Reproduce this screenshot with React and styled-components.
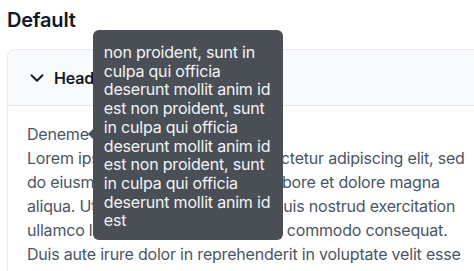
import React from 'react';
import styled, { createGlobalStyle } from 'styled-components';
import { ChevronDown } from 'lucide-react';

const GlobalStyle = createGlobalStyle`
  html, body {
    margin: 0;
    padding: 0;
    overflow: hidden;
    background: #ffffff;
    font-family: Inter, "Noto Sans", "Liberation Sans", sans-serif;
    letter-spacing: -0.2px;
  }
`;

const Page = styled.div`
  padding: 6px 0 0 7px;
  height: 271px;
  box-sizing: border-box;
  overflow: hidden;
`;

const Title = styled.h2`
  margin: 0 0 15px;
  font-size: 20px;
  line-height: 28px;
  font-weight: 600;
  color: #111827;
`;

const Card = styled.div`
  width: 490px;
  border: 1px solid #e5e7eb;
  border-radius: 8px;
  background: #ffffff;
`;

const Header = styled.button`
  display: flex;
  align-items: center;
  gap: 6px;
  width: 100%;
  height: 56px;
  padding: 0 20px 0 18px;
  border: 0;
  border-bottom: 1px solid #e5e7eb;
  border-radius: 8px 8px 0 0;
  background: #f9fafb;
  font-family: inherit;
  letter-spacing: inherit;
  font-size: 16px;
  font-weight: 600;
  color: #111827;
  text-align: left;
`;

const Body = styled.div`
  padding: 16px 28px 20px 19px;
  font-size: 16px;
  line-height: 24px;
  color: #4b5563;
`;

const Trigger = styled.span`
  position: relative;
  display: inline-block;
`;

const Tooltip = styled.div`
  position: absolute;
  left: calc(100% + 4px);
  top: -92px;
  z-index: 10;
  width: 190px;
  box-sizing: border-box;
  padding: 13px 12px 10px 11px;
  border-radius: 6px;
  background: #4a4f56;
  color: #f3f4f6;
  font-size: 16px;
  line-height: 18.7px;

  &::before {
    content: '';
    position: absolute;
    left: -5px;
    top: 99px;
    border-style: solid;
    border-width: 5px 5px 5px 0;
    border-color: transparent #4a4f56 transparent transparent;
  }
`;

const tipText =
  'non proident, sunt in culpa qui officia deserunt mollit anim id est non proident, sunt in culpa qui officia deserunt mollit anim id est non proident, sunt in culpa qui officia deserunt mollit anim id est';

export default function App() {
  return (
    <>
      <GlobalStyle />
      <Page>
        <Title>Default</Title>
        <Card>
          <Header>
            <ChevronDown size={22} strokeWidth={2} />
            Header
          </Header>
          <Body>
            <Trigger>
              Deneme
              <Tooltip>{tipText}</Tooltip>
            </Trigger>
            <br />
            Lorem ipsum dolor sit amet, consectetur adipiscing elit, sed do eiusmod tempor incididunt ut labore et
            dolore magna aliqua. Ut enim ad minim veniam, quis nostrud exercitation ullamco laboris nisi ut aliquip ex
            ea commodo consequat. Duis aute irure dolor in reprehenderit in voluptate velit esse cillum dolore eu
            fugiat nulla pariatur.
          </Body>
        </Card>
      </Page>
    </>
  );
}
